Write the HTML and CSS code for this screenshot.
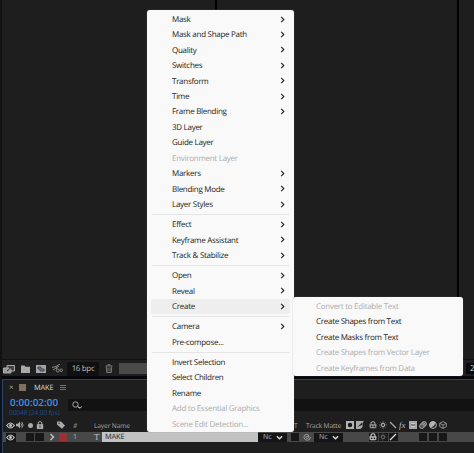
FILE: index.html

```html
<!DOCTYPE html>
<html lang="en">
<head>
<meta charset="utf-8">
<title>MAKE</title>
<link rel="stylesheet" href="styles.css">
</head>
<body>
<svg width="0" height="0" class="defs">
  <symbol id="eye" viewBox="0 0 10 8"><path d="M.7 4Q5-1.7 9.3 4Q5 9.7.7 4Z" fill="none" stroke="currentColor" stroke-width="1.3"/><circle cx="5" cy="4" r="1.6" fill="currentColor"/></symbol>
  <symbol id="chev" viewBox="0 0 5 8"><path d="M1 1L4 4L1 7" fill="none" stroke="currentColor" stroke-width="1.3"/></symbol>
  <symbol id="down" viewBox="0 0 8 5"><path d="M1 1L4 4L7 1" fill="none" stroke="currentColor" stroke-width="1.5"/></symbol>
  <symbol id="shy" viewBox="0 0 10 10"><path d="M2.5 4.5V3Q2.5 1 5 1T7.500 3V4.5M.5 5H9.5M5 4V9M2 8.500H8M1.5 5V8.500M8.5 5V8.500" fill="none" stroke="currentColor" stroke-width="1.3"/></symbol>
  <symbol id="sun" viewBox="0 0 10 10"><circle cx="5" cy="5" r="2" fill="none" stroke="currentColor" stroke-width="1.4"/><path d="M5 .5V2M5 8V9.5M.5 5H2M8 5H9.5M1.9 1.9L2.8 2.8M7.2 7.2L8.1 8.1M8.1 1.9L7.2 2.8M1.9 8.1L2.8 7.2" stroke="currentColor"/></symbol>
</svg>
<div class="app">
  <div class="viewers"><div></div><div></div><div></div></div>
  <div class="toolbar">
    <svg class="t1" viewBox="0 0 12 10"><path d="M4 1.5H11.5V7H4Z" fill="#444" stroke="#aaa"/><path d="M.5 4H8V9H.5Z" fill="#999" stroke="#aaa"/><path d="M4 7L8 3.5M6 3.3H8.3V5.5" stroke="#333" fill="none"/></svg>
    <svg class="t2" viewBox="0 0 9 8"><path d="M0 .5H3.5L4.5 1.7H9V8H0Z" fill="#aaa"/></svg>
    <svg class="t3" viewBox="0 0 10 8"><rect width="10" height="8" fill="#a4a4ac"/><path d="M2 2H5V4H8V6H4V4H2Z" fill="#888" stroke="#303040" stroke-width=".8"/></svg>
    <svg class="t4" viewBox="0 0 11 9"><path d="M0 3.5L4 2.5L8 0M1 6L7 2M4 2.5L5 5" fill="none" stroke="#888"/><circle cx="5.7" cy="6.5" r="1.5" fill="none" stroke="#888"/><circle cx="9.2" cy="6.3" r="1.3" fill="none" stroke="#888"/></svg>
    <span class="bpc">16 bpc</span>
    <svg class="t5" viewBox="0 0 8 9"><path d="M.5 2H7.5M3 1.8V.6H5V1.8M1.3 2.5L1.7 8.5H6.3L6.7 2.5M3 3.5V7.5M5 3.5V7.5" fill="none" stroke="#777"/></svg>
    <span class="thumb"></span>
    <span class="num">2</span>
  </div>
  <div class="timeline">
    <div class="tab"><span class="x">×</span><i class="sw"></i><span class="nm">MAKE</span><svg viewBox="0 0 6 6"><path d="M0 .5H6M0 2.5H6M0 4.5H6" stroke="#888" stroke-width=".8"/></svg></div>
    <div class="timebar">
      <div class="clock"><b>0:00:02:00</b><span>00048 (24.00 fps)</span></div>
      <div class="search"><svg viewBox="0 0 12 9"><circle cx="3.5" cy="3.5" r="2.7" fill="none" stroke="#aaa"/><path d="M5.5 5.5L7.5 7.5M6.5 5.5L8 7L10 5.5" fill="none" stroke="#aaa"/></svg></div>
    </div>
    <div class="row head">
      <svg class="c1 eye"><use href="#eye"/></svg>
      <svg class="c2" viewBox="0 0 9 9"><path d="M0 3H2L4.5 .5V8.5L2 6H0Z" fill="#aaa"/><path d="M5.5 2.5Q7 4.5 5.5 6.5M6.5 1Q9.5 4.5 6.5 8" fill="none" stroke="#aaa"/></svg>
      <i class="c3 dot"></i>
      <svg class="c4 lock" viewBox="0 0 7 8"><rect x=".3" y="3.2" width="6.4" height="4.8" fill="#aaa"/><path d="M1.7 4V2Q1.7.6 3.5.6T5.3 2V4" fill="none" stroke="#aaa"/><path d="M3.5 4.5V6.5" stroke="#333"/></svg>
      <svg class="c6" viewBox="0 0 9 9"><path d="M0 .5H4.5L9 5L5.5 8.7L0 4Z" fill="#aaa"/><circle cx="2.3" cy="2.5" r=".8" fill="#222"/></svg>
      <span class="c7 it">#</span><span class="ln">Layer Name</span>
      <span class="c11 t">T</span><span class="tm">Track Matte</span>
      <svg class="c14" viewBox="0 0 8 8"><rect width="8" height="8" fill="#b5b5b5"/><circle cx="4" cy="4" r="2.2" fill="#171717"/></svg>
      <svg class="c15" viewBox="0 0 8 8"><path d="M0 0H8L6.5 2V6L4.5 8H0Z" fill="#aaa"/><path d="M1.5 6L6 1.5V4Z" fill="#222"/></svg>
      <svg class="c17"><use href="#shy"/></svg>
      <svg class="c18"><use href="#sun"/></svg>
      <svg class="c19" viewBox="0 0 8 8"><path d="M1 1L7 7" stroke="#aaa" stroke-width="1.3"/></svg>
      <span class="c20 fx">fx</span>
      <svg class="c21" viewBox="0 0 8 8"><rect width="8" height="8" fill="#a8a8a8"/><path d="M2 2H6V6H2Z" fill="#ccc"/><path d="M2 4H6" stroke="#333"/></svg>
      <svg class="c22" viewBox="0 0 8 8"><g fill="#555" stroke="#aaa" stroke-width=".9"><circle cx="5.2" cy="2.8" r="2.3"/><circle cx="4" cy="4" r="2.3"/><circle cx="2.8" cy="5.2" r="2.3"/></g></svg>
      <svg class="c23" viewBox="0 0 8 8"><circle cx="4" cy="4" r="3.4" fill="#222" stroke="#b5b5b5"/><path d="M6.4 1.6A3.4 3.4 0 1 0 1.6 6.4Q5.5 6 6.4 1.6Z" fill="#b5b5b5"/></svg>
      <svg class="c24" viewBox="0 0 8 8"><path d="M4 .6L7.3 2.3V5.7L4 7.4L.7 5.7V2.3ZM.7 2.3L4 4L7.3 2.3M4 4V7.4" fill="none" stroke="#999" stroke-width=".9"/></svg>
    </div>
    <div class="row layer">
      <i class="c1 bk e"><svg class="eye"><use href="#eye"/></svg></i>
      <i class="c3 bk s"></i><i class="c4 bk"></i>
      <svg class="c5 tw"><use href="#chev"/></svg>
      <i class="c6 red"></i><span class="c7 one">1</span><span class="c8 tt">T</span><span class="name">MAKE</span>
      <span class="c10 dd">Nc<svg><use href="#down"/></svg></span>
      <i class="c11 bk s"></i>
      <svg class="c12" viewBox="0 0 9 9"><path d="M5.5 4.5Q5 3 3.8 3.7Q2.5 5 4 6Q6 6.7 6.8 4.5Q6.5 1.5 4 1.5Q1 2 1 5Q1.8 8.3 5 8.2Q8 8 8.4 4.5" fill="none" stroke="#aaa" stroke-width=".9"/></svg>
      <span class="c13 dd">Nc<svg><use href="#down"/></svg></span>
      <i class="c17 bk"><svg><use href="#shy"/></svg></i>
      <i class="c18 bk dim"><svg><use href="#sun"/></svg></i>
      <i class="c19 bk"><svg viewBox="0 0 8 8"><path d="M1 7L7 1" stroke="#ddd" stroke-width="1.3"/></svg></i>
      <i class="c22 bk s"></i><i class="c23 bk s"></i><i class="c24 bk s"></i>
    </div>
  </div>
</div>
<div class="menu main">
  <div class="mi sub">Mask<svg><use href="#chev"/></svg></div>
  <div class="mi sub">Mask and Shape Path<svg><use href="#chev"/></svg></div>
  <div class="mi sub">Quality<svg><use href="#chev"/></svg></div>
  <div class="mi sub">Switches<svg><use href="#chev"/></svg></div>
  <div class="mi sub">Transform<svg><use href="#chev"/></svg></div>
  <div class="mi sub">Time<svg><use href="#chev"/></svg></div>
  <div class="mi sub">Frame Blending<svg><use href="#chev"/></svg></div>
  <div class="mi">3D Layer</div>
  <div class="mi">Guide Layer</div>
  <div class="mi off">Environment Layer</div>
  <div class="mi sub">Markers<svg><use href="#chev"/></svg></div>
  <div class="mi sub">Blending Mode<svg><use href="#chev"/></svg></div>
  <div class="mi sub">Layer Styles<svg><use href="#chev"/></svg></div>
  <hr>
  <div class="mi sub">Effect<svg><use href="#chev"/></svg></div>
  <div class="mi sub">Keyframe Assistant<svg><use href="#chev"/></svg></div>
  <div class="mi sub">Track &amp; Stabilize<svg><use href="#chev"/></svg></div>
  <hr>
  <div class="mi sub">Open<svg><use href="#chev"/></svg></div>
  <div class="mi sub">Reveal<svg><use href="#chev"/></svg></div>
  <div class="mi sub on">Create<svg><use href="#chev"/></svg></div>
  <hr>
  <div class="mi sub">Camera<svg><use href="#chev"/></svg></div>
  <div class="mi">Pre-compose...</div>
  <hr>
  <div class="mi">Invert Selection</div>
  <div class="mi">Select Children</div>
  <div class="mi">Rename</div>
  <div class="mi off">Add to Essential Graphics</div>
  <div class="mi off">Scene Edit Detection...</div>
</div>
<div class="menu flyout">
  <div class="mi off">Convert to Editable Text</div>
  <div class="mi">Create Shapes from Text</div>
  <div class="mi">Create Masks from Text</div>
  <div class="mi off">Create Shapes from Vector Layer</div>
  <div class="mi off">Create Keyframes from Data</div>
</div>
</body>
</html>
```

FILE: styles.css

```css
* { box-sizing: border-box; }
body { margin: 0; width: 474px; height: 453px; overflow: hidden; background: #1e1e1e; font-family: "Open Sans", "Noto Sans", sans-serif; color: #aaa; text-rendering: geometricPrecision; }
svg { display: block; }
.defs { position: absolute; }
.app { height: 453px; display: flex; flex-direction: column; border-left: 2px solid #121212; }
.viewers { height: 360px; display: grid; grid-template-columns: 213px 240px 15px; gap: 2px; background: #000; border-bottom: 1px solid #111; }
.viewers div { background: #1e1e1e; }
.toolbar { height: 16px; display: flex; align-items: center; padding: 1px 0 0 1px; }
.toolbar > * { flex-shrink: 0; }
.t1 { width: 12px; height: 10px; margin-right: 6px; }
.t2 { width: 9px; height: 8px; margin-right: 6px; }
.t3 { width: 10px; height: 8px; margin-right: 6px; }
.t4 { width: 11px; height: 9px; margin-right: 4px; }
.bpc { width: 32px; height: 14px; line-height: 14px; background: #101010; border-radius: 2px; color: #bbb; font-size: 8px; letter-spacing: -.35px; text-align: center; white-space: nowrap; }
.t5 { width: 8px; height: 9px; margin: 0 6px; }
.thumb { width: 320px; height: 11px; background: #4a4a4a; }
.num { margin-left: auto; width: 8px; height: 11px; background: #080808; color: #ddd; font-size: 8px; line-height: 11px; padding-left: 4px; overflow: hidden; }
.timeline { flex: 1; border-top: 3px solid #05070c; display: flex; flex-direction: column; box-shadow: inset 1px 1px #24456e; }
.tab { height: 17px; display: flex; align-items: center; padding-left: 7px; }
.tab > * { flex-shrink: 0; }
.tab .x { width: 10px; font-size: 8px; line-height: 10px; }
.tab .sw { width: 7px; height: 7px; background: #80705f; margin-right: 8px; }
.tab .nm { width: 26px; font-size: 7.4px; letter-spacing: -.1px; color: #ddd; }
.tab svg { width: 6px; height: 6px; }
.timebar { height: 22px; display: flex; padding-left: 8px; }
.clock { width: 58px; white-space: nowrap; }
.clock b { display: block; font-size: 9.8px; line-height: 14px; font-weight: 600; color: #4193e8; letter-spacing: .1px; }
.clock span { display: block; font-size: 6.6px; line-height: 5px; color: #194d8c; letter-spacing: -.1px; margin-left: -1px; }
.search { flex: 1; height: 12px; margin-top: 3px; background: #121212; padding: 2px 4px; }
.search svg { width: 12px; height: 9px; }
.row { display: grid; grid-template-columns: 10px 10px 9px 10px 12px 12px 12px 21px 156px 33px 12px 11px 31px 10px 12px 2px 10px 10px 10px 10px 10px 10px 10px 10px; grid-template-rows: 100%; margin-left: 1px; padding-left: 3px; align-items: center; }
.row > * { grid-row: 1; }
.row svg { width: 8px; height: 8px; }
.row .eye { width: 9px; height: 7px; color: #ccc; }
.head { height: 14px; font-size: 6.6px; white-space: nowrap; letter-spacing: -.12px; }
.layer { height: 10px; background: #484848; }
.c1 { grid-column: 1; } .c2 { grid-column: 2; } .c3 { grid-column: 3; } .c4 { grid-column: 4; }
.c5 { grid-column: 5; } .c6 { grid-column: 6; } .c7 { grid-column: 7; } .c8 { grid-column: 8; }
.c10 { grid-column: 10; } .c11 { grid-column: 11; } .c12 { grid-column: 12; } .c13 { grid-column: 13; }
.c14 { grid-column: 14; } .c15 { grid-column: 15; } .c17 { grid-column: 17; } .c18 { grid-column: 18; }
.c19 { grid-column: 19; } .c20 { grid-column: 20; } .c21 { grid-column: 21; } .c22 { grid-column: 22; }
.c23 { grid-column: 23; } .c24 { grid-column: 24; }
.c14, .c15 { margin-left: 1px; }
.dot { width: 5px; height: 5px; border-radius: 50%; background: #aaa; margin-left: 2px; }
.row .lock { margin-left: 1px; }
.it { font-style: italic; padding-left: 4px; }
.ln { grid-column: 8 / 10; padding-left: 13px; }
.tm { grid-column: 12 / 14; padding-left: 3px; }
.t { padding-left: 3px; }
.fx { font: italic 9px/10px "Liberation Serif", serif; color: #bbb; }
.bk { width: 9px; height: 8px; background: #171717; color: #ddd; display: flex; }
.bk.s { width: 8px; }
.bk.e { width: 10px; height: 9px; align-items: center; }
.bk.dim { color: #666; }
.row .tw { color: #ccc; margin-left: 3px; }
.red { width: 8px; height: 8px; background: #9b2f33; margin-left: 2px; }
.one { font-size: 7px; line-height: 10px; padding: 1px 0 0 4px; color: #bbb; }
.tt { font: 9px/10px "Liberation Serif", serif; padding-left: 13px; color: #bbb; }
.name { grid-column: 9; height: 10px; background: #c2c2c2; color: #222; font-size: 7.4px; line-height: 10px; letter-spacing: -.1px; padding-left: 3px; }
.dd { height: 9px; width: 29px; background: #151515; color: #bbb; font-size: 7px; line-height: 11px; display: flex; align-items: center; padding-left: 5px; gap: 4px; }
.layer .dd svg { width: 7px; height: 5px; color: #ddd; }
.menu { position: absolute; background: #f9f9f9; border-radius: 3px; color: #222; font-size: 8px; letter-spacing: -.28px; white-space: nowrap; box-shadow: 0 0 1px #777; }
.main { left: 147px; top: 10px; width: 147px; height: 422px; padding: 1.9px 4px; }
.mi { height: 15.43px; line-height: 15.43px; padding-left: 21px; border-radius: 2px; }
.sub { display: flex; align-items: center; justify-content: space-between; padding-right: 5px; }
.sub svg { width: 5px; height: 7px; color: #222; margin-top: -1px; }
.on { background: #eeeeee; }
.off { color: #adadad; }
.menu hr { margin: 1.7px 1px 2.1px; border: 0; height: 1px; background: #e5e5e5; }
.flyout { left: 293px; top: 297px; width: 170px; height: 79px; padding: 1.9px 2px; }
```
